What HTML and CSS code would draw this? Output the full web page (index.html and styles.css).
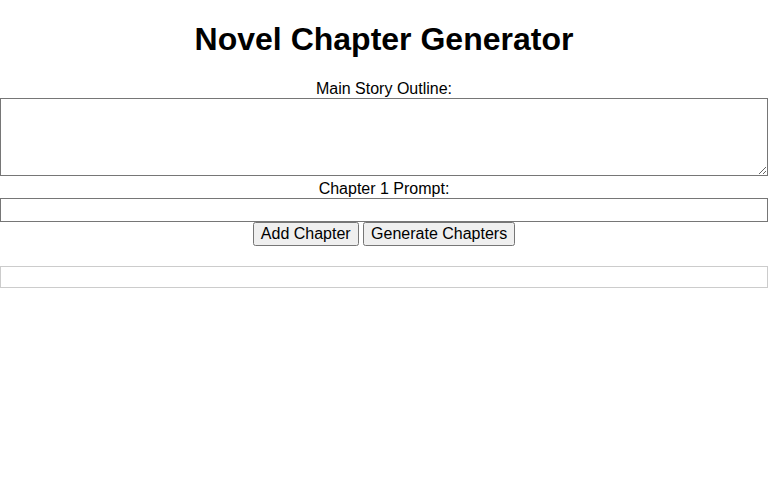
FILE: index.html
```html
<!DOCTYPE html>
<html lang="en">
<head>
    <meta charset="UTF-8">
    <meta name="viewport" content="width=device-width, initial-scale=1.0">
    <title>Novel Chapter Generator</title>
    <link rel="stylesheet" href="styles.css">
</head>
<body>

<h1>Novel Chapter Generator</h1>

<div class="form">
    <label for="outline">Main Story Outline:</label>
    <textarea id="outline" class="outline"></textarea>

    <div id="chapters">
        <div class="chapter">
            <label for="chapter-1">Chapter 1 Prompt:</label>
            <input type="text" id="chapter-1" class="chapter-input">
        </div>
    </div>

    <div class="actions">
        <button id="add-btn">Add Chapter</button>
        <button id="generate-btn">Generate Chapters</button>
    </div>
</div>

<div id="output" class="output"></div>

</body>
</html>
```

FILE: styles.css
```css
body {
    margin: 0;
    font-family: "Liberation Sans", Arial, sans-serif;
    text-align: center;
    color: #000;
    background: #fff;
}

h1 {
    font-size: 32px;
    margin: 21px 0 22px;
    line-height: 37px;
}

label {
    display: block;
    font-size: 16px;
    line-height: 18px;
}

.outline {
    display: block;
    width: 100%;
    height: 78px;
    box-sizing: border-box;
    margin: 0 0 4px;
    border: 1px solid #767676;
    font-family: "Liberation Mono", monospace;
}

.chapter-input {
    display: block;
    width: 100%;
    height: 24px;
    box-sizing: border-box;
    margin: 0;
    border: 1px solid #767676;
    font-size: 16px;
}

.actions {
    height: 24px;
}

button {
    font-family: "Liberation Sans", Arial, sans-serif;
    font-size: 16px;
    height: 24px;
    padding: 1px 6px;
    margin: 0;
    vertical-align: top;
}

.output {
    margin-top: 20px;
    height: 22px;
    box-sizing: border-box;
    border: 1px solid #ccc;
}
```
